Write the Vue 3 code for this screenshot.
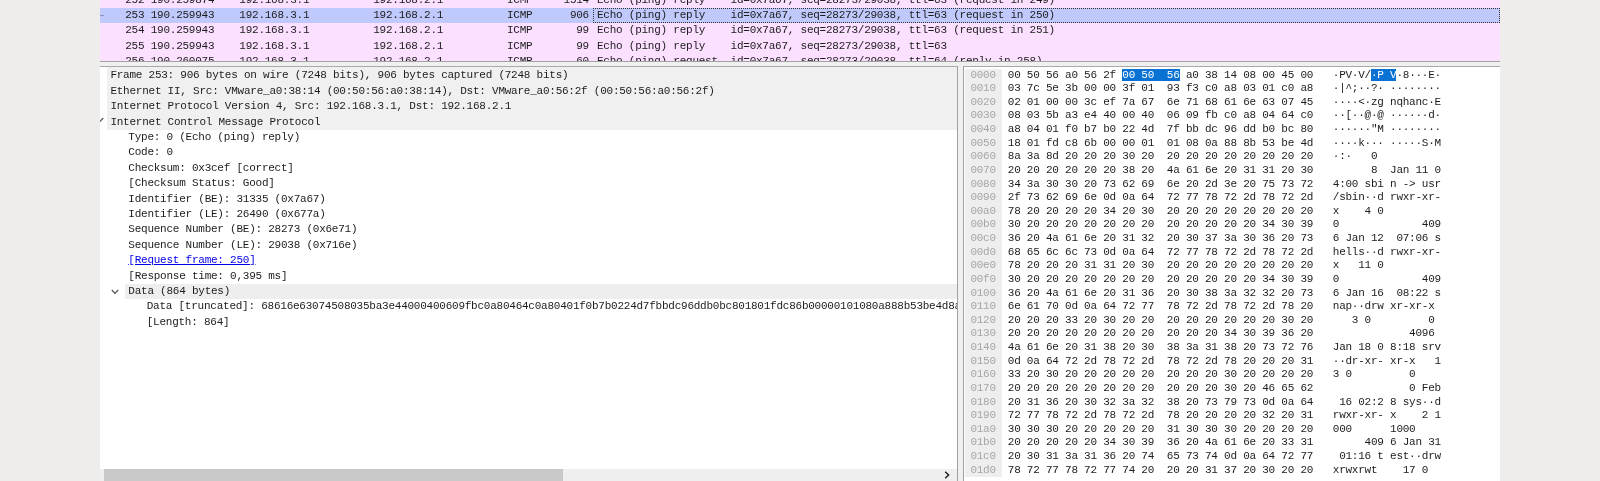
<script setup>
const packets = [
  { no: 252, time: '190.259874', len: 1514, info: 'Echo (ping) reply    id=0x7a67, seq=28273/29038, ttl=63 (request in 249)' },
  { no: 253, time: '190.259943', len: 906, info: 'Echo (ping) reply    id=0x7a67, seq=28273/29038, ttl=63 (request in 250)', sel: true },
  { no: 254, time: '190.259943', len: 99, info: 'Echo (ping) reply    id=0x7a67, seq=28273/29038, ttl=63 (request in 251)' },
  { no: 255, time: '190.259943', len: 99, info: 'Echo (ping) reply    id=0x7a67, seq=28273/29038, ttl=63' },
  { no: 256, time: '190.260075', len: 60, info: 'Echo (ping) request  id=0x7a67, seq=28273/29038, ttl=64 (reply in 258)' },
]

const tree = [
  { t: 'Frame 253: 906 bytes on wire (7248 bits), 906 bytes captured (7248 bits)', k: 'head' },
  { t: 'Ethernet II, Src: VMware_a0:38:14 (00:50:56:a0:38:14), Dst: VMware_a0:56:2f (00:50:56:a0:56:2f)', k: 'head' },
  { t: 'Internet Protocol Version 4, Src: 192.168.3.1, Dst: 192.168.2.1', k: 'head' },
  { t: 'Internet Control Message Protocol', k: 'head', chev: true },
  { t: 'Type: 0 (Echo (ping) reply)', k: 'child' },
  { t: 'Code: 0', k: 'child' },
  { t: 'Checksum: 0x3cef [correct]', k: 'child' },
  { t: '[Checksum Status: Good]', k: 'child' },
  { t: 'Identifier (BE): 31335 (0x7a67)', k: 'child' },
  { t: 'Identifier (LE): 26490 (0x677a)', k: 'child' },
  { t: 'Sequence Number (BE): 28273 (0x6e71)', k: 'child' },
  { t: 'Sequence Number (LE): 29038 (0x716e)', k: 'child' },
  { t: '[Request frame: 250]', k: 'child', link: true },
  { t: '[Response time: 0,395 ms]', k: 'child' },
  { t: 'Data (864 bytes)', k: 'sub', chev: true },
  { t: 'Data [truncated]: 68616e63074508035ba3e44000400609fbc0a80464c0a80401f0b7b0224d7fbbdc96ddb0bc801801fdc86b00000101080a888b53be4d8a3a8d2020203020202020', k: 'leaf' },
  { t: '[Length: 864]', k: 'leaf' },
]

const raw = `00 50 56 a0 56 2f 00 50 56 a0 38 14 08 00 45 00
03 7c 5e 3b 00 00 3f 01 93 f3 c0 a8 03 01 c0 a8
02 01 00 00 3c ef 7a 67 6e 71 68 61 6e 63 07 45
08 03 5b a3 e4 40 00 40 06 09 fb c0 a8 04 64 c0
a8 04 01 f0 b7 b0 22 4d 7f bb dc 96 dd b0 bc 80
18 01 fd c8 6b 00 00 01 01 08 0a 88 8b 53 be 4d
8a 3a 8d 20 20 20 30 20 20 20 20 20 20 20 20 20
20 20 20 20 20 20 38 20 4a 61 6e 20 31 31 20 30
34 3a 30 30 20 73 62 69 6e 20 2d 3e 20 75 73 72
2f 73 62 69 6e 0d 0a 64 72 77 78 72 2d 78 72 2d
78 20 20 20 20 34 20 30 20 20 20 20 20 20 20 20
30 20 20 20 20 20 20 20 20 20 20 20 20 34 30 39
36 20 4a 61 6e 20 31 32 20 30 37 3a 30 36 20 73
68 65 6c 6c 73 0d 0a 64 72 77 78 72 2d 78 72 2d
78 20 20 20 31 31 20 30 20 20 20 20 20 20 20 20
30 20 20 20 20 20 20 20 20 20 20 20 20 34 30 39
36 20 4a 61 6e 20 31 36 20 30 38 3a 32 32 20 73
6e 61 70 0d 0a 64 72 77 78 72 2d 78 72 2d 78 20
20 20 20 33 20 30 20 20 20 20 20 20 20 20 30 20
20 20 20 20 20 20 20 20 20 20 20 34 30 39 36 20
4a 61 6e 20 31 38 20 30 38 3a 31 38 20 73 72 76
0d 0a 64 72 2d 78 72 2d 78 72 2d 78 20 20 20 31
33 20 30 20 20 20 20 20 20 20 20 30 20 20 20 20
20 20 20 20 20 20 20 20 20 20 20 30 20 46 65 62
20 31 36 20 30 32 3a 32 38 20 73 79 73 0d 0a 64
72 77 78 72 2d 78 72 2d 78 20 20 20 20 32 20 31
30 30 30 20 20 20 20 20 31 30 30 30 20 20 20 20
20 20 20 20 20 34 30 39 36 20 4a 61 6e 20 33 31
20 30 31 3a 31 36 20 74 65 73 74 0d 0a 64 72 77
78 72 77 78 72 77 74 20 20 20 31 37 20 30 20 20`

const toAscii = (bytes) =>
  bytes.map((b) => {
    const c = parseInt(b, 16)
    return c >= 32 && c < 127 ? String.fromCharCode(c) : '·'
  }).join('')

const hexRows = raw.split('\n').map((line, i) => {
  const b = line.trim().split(' ')
  return {
    off: (i * 16).toString(16).padStart(4, '0'),
    hex: b.slice(0, 8).join(' ') + '  ' + b.slice(8).join(' '),
    ascii: toAscii(b.slice(0, 8)) + ' ' + toAscii(b.slice(8)),
  }
})
</script>

<template>
  <div class="page">
    <div class="window">
      <div class="list">
        <div class="list-inner">
          <div v-for="p in packets" :key="p.no" class="pkt" :class="{ sel: p.sel }">
            <span class="c-no">{{ p.no }}</span>
            <span class="c-time">{{ p.time }}</span>
            <span>192.168.3.1</span>
            <span>192.168.2.1</span>
            <span>ICMP</span>
            <span class="c-len">{{ p.len }}</span>
            <span class="c-info">{{ p.info }}</span>
          </div>
        </div>
      </div>
      <div class="sash"></div>
      <div class="panes">
        <div class="tree">
          <div class="tree-rows">
            <div v-for="(r, i) in tree" :key="i" class="row" :class="r.k">
              <span class="slot">
                <svg v-if="r.chev" class="chev" viewBox="0 0 8 6" width="8" height="6">
                  <path d="M0.8 1 L4 4.4 L7.2 1" fill="none" stroke="#555" stroke-width="1.3" />
                </svg>
              </span>
              <span class="label" :class="{ link: r.link }">{{ r.t }}</span>
            </div>
          </div>
          <div class="hscroll">
            <div class="thumb"></div>
            <svg class="arrow" viewBox="0 0 6 8" width="6" height="8">
              <path d="M1.2 0.8 L4.6 4 L1.2 7.2" fill="none" stroke="#222" stroke-width="1.5" />
            </svg>
          </div>
        </div>
        <div class="gutter"></div>
        <div class="hex">
          <div v-for="(h, i) in hexRows" :key="h.off" class="hrow">
            <span class="off">{{ h.off }}</span>
            <span v-if="i === 0" class="bytes">{{ h.hex.slice(0, 18) }}<mark>{{ h.hex.slice(18, 27) }}</mark>{{ h.hex.slice(27) }}</span>
            <span v-else class="bytes">{{ h.hex }}</span>
            <span v-if="i === 0" class="ascii">{{ h.ascii.slice(0, 6) }}<mark>{{ h.ascii.slice(6, 10) }}</mark>{{ h.ascii.slice(10) }}</span>
            <span v-else class="ascii">{{ h.ascii }}</span>
          </div>
        </div>
      </div>
    </div>
  </div>
</template>

<style>
html, body { margin: 0; background: #eeedeb; }
</style>

<style scoped>
.page {
  width: 1600px;
  height: 481px;
  overflow: hidden;
  display: flex;
  justify-content: center;
  background: #eeedeb;
  font-family: "Liberation Mono", monospace;
  font-size: 11px;
  letter-spacing: -0.24px;
  color: #1c1c1c;
  white-space: pre;
  filter: blur(0.3px);
}
.window {
  width: 1400px;
  height: 481px;
  display: flex;
  flex-direction: column;
}
.list {
  height: 61px;
  flex: none;
  overflow: hidden;
  background: #fce0ff;
  border-bottom: 1px solid #a2a2a2;
}
.list-inner { margin-top: -7.4px; }
.pkt {
  height: 15.4px;
  line-height: 15.4px;
  position: relative;
  display: grid;
  grid-template-columns: 44.3px 95px 133.9px 133.8px 53px 29px 1fr;
}
.pkt.sel { background: #c0c9fc; }
.pkt.sel::before {
  content: "";
  position: absolute;
  left: 0;
  top: 7px;
  width: 4px;
  height: 1px;
  background: #8e94c4;
}
.c-no, .c-len { text-align: right; }
.c-time { padding-left: 6.4px; }
.c-info {
  margin-left: 4px;
  padding-left: 3px;
  border: 1px dotted transparent;
  line-height: 13.4px;
}
.sel .c-info { border-color: #333; }
.sash {
  height: 4px;
  flex: none;
  background: #f0f0f0;
}
.panes {
  flex: 1;
  min-height: 0;
  display: flex;
}
.tree {
  width: 858px;
  flex: none;
  box-sizing: border-box;
  background: #fff;
  border-top: 1px solid #a9a9a9;
  border-right: 1px solid #a0a0a0;
  display: flex;
  flex-direction: column;
  overflow: hidden;
}
.tree-rows {
  flex: 1;
  min-height: 0;
  overflow: hidden;
}
.row {
  display: flex;
  height: 15.42px;
  line-height: 15.42px;
}
.row:first-child { height: 16.72px; }
.row:first-child .label { padding-top: 1.3px; }
.slot {
  flex: none;
  display: flex;
  align-items: center;
}
.label {
  flex: 1;
  min-width: 0;
  overflow: hidden;
}
.head .slot { width: 6.7px; }
.head .label { background: #f0f0f0; padding-left: 3.7px; }
.head .chev { margin-left: -4.5px; margin-top: -5px; }
.child .slot { width: 25px; }
.child .label { padding-left: 3.3px; }
.sub .slot { width: 25px; justify-content: flex-end; padding-right: 6px; box-sizing: border-box; }
.sub .label { background: #eeeeee; padding-left: 3.3px; }
.leaf .slot { width: 25px; }
.leaf .label { padding-left: 21.7px; }
.link { color: #0000e6; }
.child .link { text-decoration: underline; }
.hscroll {
  flex: none;
  height: 12px;
  background: #efefef;
  display: flex;
  align-items: center;
  padding-left: 4.4px;
  padding-right: 7px;
}
.thumb {
  width: 459px;
  height: 12px;
  background: #c9c9c9;
}
.arrow { margin-left: auto; }
.gutter {
  width: 5px;
  flex: none;
  background: #f0f0f0;
}
.hex {
  flex: 1;
  min-width: 0;
  background: #fff;
  border-top: 1px solid #a9a9a9;
  border-left: 1px solid #a0a0a0;
  padding-top: 1.6px;
}
.hrow {
  display: flex;
  height: 13.63px;
  line-height: 13.63px;
}
.off {
  flex: none;
  width: 31.4px;
  margin-left: 1px;
  padding-left: 5.4px;
  background: #eeeeee;
  color: #a6a6a6;
}
.bytes {
  flex: none;
  width: 325px;
  margin-left: 6px;
}
.ascii { flex: none; }
mark {
  background: #0a72d2;
  color: #fff;
}
</style>
